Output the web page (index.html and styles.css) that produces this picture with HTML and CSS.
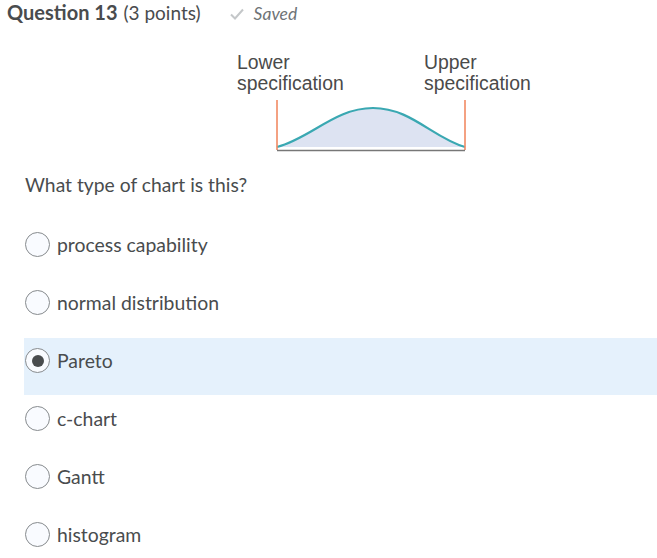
FILE: index.html
```html
<!DOCTYPE html>
<html>
<head>
<meta charset="utf-8">
<link rel="stylesheet" href="styles.css">
</head>
<body>
<div class="header">
  <span class="q-title">Question 13</span>
  <span class="q-points">(3 points)</span>
  <span class="saved">
    <svg class="check" width="16" height="14" viewBox="0 0 16 14"><path d="M2 7.5 L6 11.5 L14 2.5" fill="none" stroke="#c4c7c9" stroke-width="2"/></svg>
    <span class="saved-text">Saved</span>
  </span>
</div>
<div class="figure">
  <svg width="310" height="106" viewBox="0 0 310 106">
    <text x="4" y="19" class="lbl">Lower</text>
    <text x="4" y="40" class="lbl">specification</text>
    <text x="191" y="19" class="lbl">Upper</text>
    <text x="191" y="40" class="lbl">specification</text>
    <path d="M44 97 C 78 88, 102 58, 140 58 C 178 58, 200 88, 232 97 Z" fill="#dde3f2"/>
    <path d="M44 97 C 78 88, 102 58, 140 58 C 178 58, 200 88, 232 97" fill="none" stroke="#3aa8b2" stroke-width="2.2"/>
    <line x1="44" y1="50" x2="44" y2="100" stroke="#f28a63" stroke-width="1.6"/>
    <line x1="232" y1="50" x2="232" y2="100" stroke="#f28a63" stroke-width="1.6"/>
    <line x1="44" y1="100.5" x2="232" y2="100.5" stroke="#777" stroke-width="1.5"/>
  </svg>
</div>
<p class="question">What type of chart is this?</p>
<ul class="options">
  <li class="option"><span class="radio"></span><span class="opt-text">process capability</span></li>
  <li class="option"><span class="radio"></span><span class="opt-text">normal distribution</span></li>
  <li class="option selected"><span class="radio checked"></span><span class="opt-text">Pareto</span></li>
  <li class="option"><span class="radio"></span><span class="opt-text">c-chart</span></li>
  <li class="option"><span class="radio"></span><span class="opt-text">Gantt</span></li>
  <li class="option"><span class="radio"></span><span class="opt-text">histogram</span></li>
</ul>
</body>
</html>
```
FILE: styles.css
```css
html, body {
  margin: 0;
  padding: 0;
  background: #ffffff;
  font-family: Lato, "Open Sans", sans-serif;
  color: #494c4e;
  overflow: hidden;
}
.header {
  display: flex;
  align-items: baseline;
  padding-left: 7px;
  height: 24px;
  line-height: 24px;
}
.q-title {
  font-weight: 700;
  font-size: 20px;
}
.q-points {
  font-size: 19px;
  margin-left: 6px;
}
.saved {
  margin-left: 28px;
  display: inline-flex;
  align-items: baseline;
}
.check {
  position: relative;
  top: 1px;
}
.saved-text {
  font-style: italic;
  font-size: 17.5px;
  color: #6e7376;
  margin-left: 9px;
}
.figure {
  margin-left: 233px;
  margin-top: 26px;
  height: 106px;
}
.figure svg {
  display: block;
}
.lbl {
  font-family: "Liberation Sans", Arial, sans-serif;
  font-size: 19.4px;
  fill: #4a4a4a;
}
.question {
  margin: 18px 0 0 25px;
  font-size: 19.3px;
  line-height: 22px;
}
.options {
  list-style: none;
  margin: 26px 0 0 0;
  padding: 0 0 0 24px;
}
.option {
  display: flex;
  align-items: flex-start;
  height: 58px;
  box-sizing: border-box;
  padding: 10px 0 0 1px;
}
.option.selected {
  background: #e5f1fc;
  height: 57px;
  margin-bottom: 1px;
}
.radio {
  width: 25px;
  height: 25px;
  box-sizing: border-box;
  border: 1px solid #878b8e;
  border-radius: 50%;
  background: #f9fbff;
  display: flex;
  align-items: center;
  justify-content: center;
  flex: none;
}
.radio.checked::after {
  content: "";
  width: 12px;
  height: 12px;
  border-radius: 50%;
  background: #494c4e;
}
.opt-text {
  font-size: 19.4px;
  line-height: 25px;
  margin-left: 7px;
}
```
